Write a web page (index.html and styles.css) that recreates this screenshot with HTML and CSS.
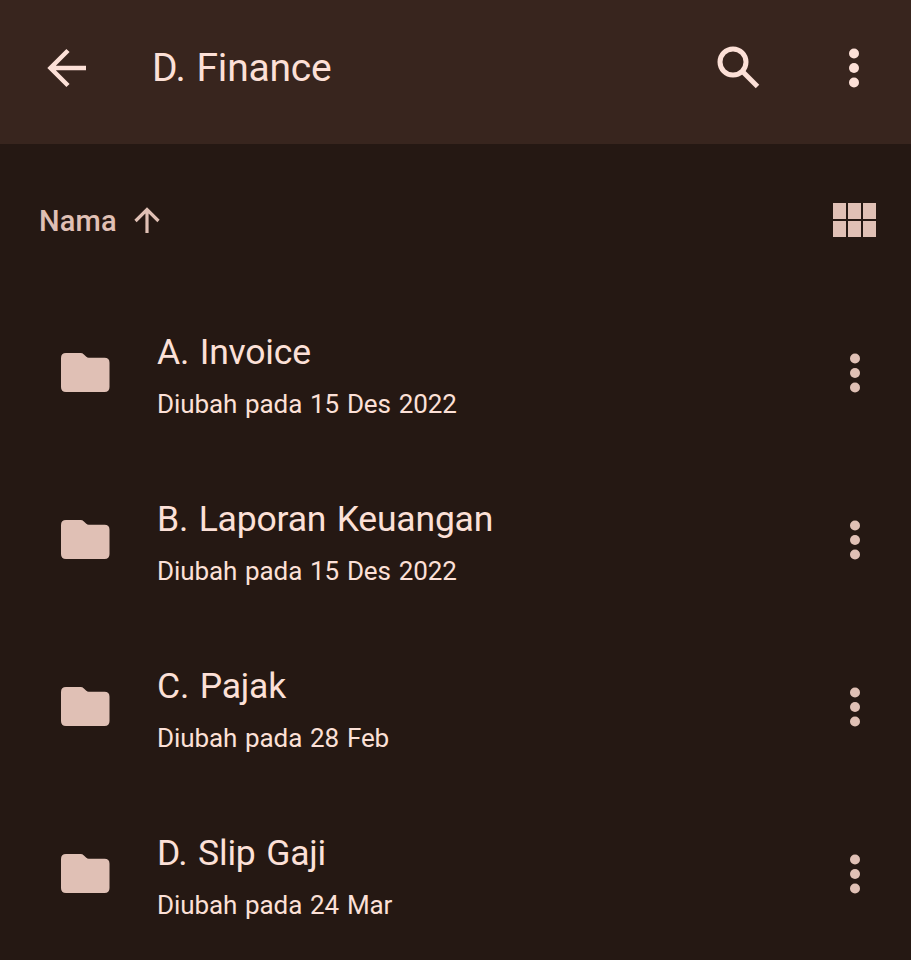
FILE: index.html
```html
<!DOCTYPE html>
<html lang="id">
<head>
    <meta charset="UTF-8">
    <title>D. Finance</title>
    <link rel="stylesheet" href="styles.css">
</head>
<body class="page">
<svg class="sprite" aria-hidden="true">
    <symbol id="folder" viewBox="0 0 49 40">
        <path d="M5 0h14.500q2 0 3.400 1.400l2.400 2.400q1 1 2.400 1H43.500q5 0 5 5V34q0 5-5 5H5q-5 0-5-5V5q0-5 5-5z"/>
    </symbol>
    <symbol id="more" viewBox="0 0 12 40">
        <circle cx="6" cy="5.500" r="5"/>
        <circle cx="6" cy="20" r="5"/>
        <circle cx="6" cy="34.500" r="5"/>
    </symbol>
</svg>

<header class="topbar">
    <svg class="icon-back" viewBox="0 0 40 40">
        <path d="M39 20H4M21 2.500L3.500 20l17.500 17.500"/>
    </svg>
    <h1 class="topbar-title">D. Finance</h1>
    <svg class="icon-search" viewBox="0 0 44 44">
        <circle cx="16" cy="16" r="13"/>
        <path d="M26 26L40.500 40.500"/>
    </svg>
    <svg class="icon-more"><use href="#more"/></svg>
</header>

<main>
    <div class="sort">
        <span class="sort-label">Nama</span>
        <svg class="icon-up" viewBox="0 0 26 26">
            <path d="M13 26V2.500M1.500 14L13 2.500 24.500 14"/>
        </svg>
        <div class="grid-toggle">
            <i></i><i></i><i></i><i></i><i></i><i></i>
        </div>
    </div>

    <ul class="files">
        <li class="file">
            <svg class="icon-folder"><use href="#folder"/></svg>
            <div class="file-text">
                <div class="file-name">A. Invoice</div>
                <div class="file-date">Diubah pada 15 Des 2022</div>
            </div>
            <svg class="icon-more"><use href="#more"/></svg>
        </li>
        <li class="file">
            <svg class="icon-folder"><use href="#folder"/></svg>
            <div class="file-text">
                <div class="file-name">B. Laporan Keuangan</div>
                <div class="file-date">Diubah pada 15 Des 2022</div>
            </div>
            <svg class="icon-more"><use href="#more"/></svg>
        </li>
        <li class="file">
            <svg class="icon-folder"><use href="#folder"/></svg>
            <div class="file-text">
                <div class="file-name">C. Pajak</div>
                <div class="file-date">Diubah pada 28 Feb</div>
            </div>
            <svg class="icon-more"><use href="#more"/></svg>
        </li>
        <li class="file">
            <svg class="icon-folder"><use href="#folder"/></svg>
            <div class="file-text">
                <div class="file-name">D. Slip Gaji</div>
                <div class="file-date">Diubah pada 24 Mar</div>
            </div>
            <svg class="icon-more"><use href="#more"/></svg>
        </li>
    </ul>
</main>
</body>
</html>
```
FILE: styles.css
```css
* {
    box-sizing: border-box;
}

.page {
    margin: 0;
    height: 960px;
    overflow: hidden;
    background: #251813;
    color: #fce0d7;
    font-family: Roboto, "Liberation Sans", sans-serif;
}

.sprite {
    display: none;
}

.topbar {
    display: flex;
    align-items: center;
    height: 144px;
    padding: 0 51px 8px 47px;
    background: #38251e;
}

.topbar-title {
    flex: 1;
    margin: 0 0 0 65px;
    font-size: 39px;
    font-weight: 400;
    line-height: 48px;
    letter-spacing: -0.2px;
    word-spacing: 1.5px;
}

.icon-back,
.icon-up,
.icon-search {
    fill: none;
    stroke: currentColor;
}

.icon-back {
    width: 40px;
    height: 40px;
    stroke-width: 4.5;
}

.icon-search {
    width: 44px;
    height: 44px;
    margin-right: 87px;
    stroke-width: 5;
}

.icon-more {
    width: 12px;
    height: 40px;
    fill: currentColor;
}

.sort {
    display: flex;
    align-items: center;
    height: 152px;
    padding: 0 35px 0 39px;
    color: #e0c0b5;
}

.sort-label {
    padding-top: 2px;
    font-size: 29px;
    font-weight: 500;
    line-height: 36px;
    letter-spacing: 0.2px;
}

.icon-up {
    width: 26px;
    height: 26px;
    margin-left: 17px;
    stroke-width: 3.2;
}

.grid-toggle {
    display: grid;
    grid-template-columns: repeat(3, 13px);
    grid-auto-rows: 16px;
    gap: 2px;
    margin-left: auto;
}

.grid-toggle i {
    background: currentColor;
}

.files {
    margin: 0;
    padding: 0;
    list-style: none;
}

.file {
    display: flex;
    align-items: center;
    height: 167px;
    padding: 0 50.5px 14px 61px;
}

.file .icon-more,
.icon-folder {
    color: #e0c0b5;
}

.icon-folder {
    width: 49px;
    height: 40px;
    fill: currentColor;
}

.file-text {
    flex: 1;
    margin-left: 47px;
    padding-top: 10px;
}

.file-name {
    font-size: 35.5px;
    line-height: 52px;
    letter-spacing: -0.2px;
    word-spacing: 2px;
}

.file-date {
    font-size: 26px;
    line-height: 52px;
    letter-spacing: -0.1px;
    word-spacing: 1.5px;
}
```
